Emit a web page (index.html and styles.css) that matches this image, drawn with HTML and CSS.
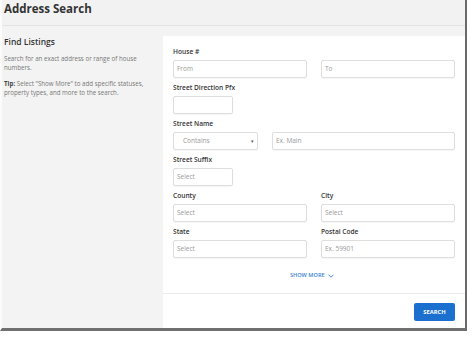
FILE: index.html
```html
<!DOCTYPE html>
<html>
<head>
<meta charset="utf-8">
<link rel="stylesheet" href="styles.css">
</head>
<body>
<div class="window">
  <div class="header"><h1 class="title">Address Search</h1></div>
  <div class="main">
    <aside class="sidebar">
      <h2 class="side-title">Find Listings</h2>
      <p class="side-text">Search for an exact address or range of house numbers.</p>
      <p class="side-text"><span class="tip">Tip:</span> Select "Show More" to add specific statuses, property types, and more to the search.</p>
    </aside>
    <section class="card">
      <div class="card-body">
        <div class="group">
          <div class="label">House #</div>
          <div class="row">
            <div class="input wide">From</div>
            <div class="input wide">To</div>
          </div>
        </div>
        <div class="group">
          <div class="label">Street Direction Pfx</div>
          <div class="row"><div class="input short"></div></div>
        </div>
        <div class="group">
          <div class="label">Street Name</div>
          <div class="row">
            <div class="input select">Contains<span class="caret">&#9662;</span></div>
            <div class="input fill">Ex. Main</div>
          </div>
        </div>
        <div class="group">
          <div class="label">Street Suffix</div>
          <div class="row"><div class="input short">Select</div></div>
        </div>
        <div class="group pair">
          <div class="col">
            <div class="label">County</div>
            <div class="input">Select</div>
          </div>
          <div class="col">
            <div class="label">City</div>
            <div class="input">Select</div>
          </div>
        </div>
        <div class="group pair">
          <div class="col">
            <div class="label">State</div>
            <div class="input">Select</div>
          </div>
          <div class="col">
            <div class="label">Postal Code</div>
            <div class="input">Ex. 59901</div>
          </div>
        </div>
        <div class="show-more">SHOW MORE <svg class="chev" width="6" height="4" viewBox="0 0 6 4"><path d="M0.5 0.7 L3 3.2 L5.5 0.7" fill="none" stroke="#3b7fd4" stroke-width="0.9"/></svg></div>
      </div>
      <div class="card-foot"><button class="btn">SEARCH</button></div>
    </section>
  </div>
</div>
</body>
</html>
```
FILE: styles.css
```css
* { box-sizing: border-box; }
html, body { margin: 0; padding: 0; background: #fff; }
body { font-family: "Open Sans", "Liberation Sans", sans-serif; color: #333; }

.window {
  width: 467px;
  height: 331px;
  background: #f3f3f3;
  border-right: 2px solid #6a6a6a;
  border-bottom: 3px solid #707070;
  border-left: 2px solid #fbfbfb;
  display: flex;
  flex-direction: column;
}
.header {
  height: 26px;
  flex: none;
  border-bottom: 1px solid #e3e3e3;
  background: #f2f2f2;
  padding: 0 0 0 2px;
}
.title {
  margin: 0;
  font-size: 11.5px;
  font-weight: 700;
  line-height: 17px;
  color: #333;
}
.main { flex: 1; display: flex; }
.sidebar {
  width: 161px;
  flex: none;
  padding: 10px 10px 0 2px;
}
.side-title {
  margin: 0 0 6px;
  font-size: 8.5px;
  font-weight: 600;
  line-height: 12px;
  color: #333;
}
.side-text {
  margin: 0 0 7px;
  font-size: 6.2px;
  line-height: 9px;
  color: #777;
}
.tip { color: #444; font-weight: 700; }

.card {
  flex: 1;
  margin-top: 10px;
  background: #fff;
  display: flex;
  flex-direction: column;
}
.card-body {
  height: 258px;
  padding: 11px 10px 0;
  border-bottom: 1px solid #ececec;
}
.group { margin-bottom: 5px; }
.pair { margin-top: 1px; }
.label {
  font-size: 6.6px;
  font-weight: 600;
  line-height: 10px;
  margin-bottom: 3px;
  color: #333;
}
.row { display: flex; gap: 14px; }
.input {
  height: 18px;
  border: 1px solid #dedede;
  border-radius: 2px;
  box-shadow: 0 1px 1px rgba(0,0,0,0.04);
  font-size: 6.5px;
  line-height: 16px;
  padding-left: 3px;
  color: #999;
  background: #fff;
}
.wide { flex: 1; }
.short { width: 60px; }
.select { width: 85px; padding-left: 9px; display: flex; justify-content: space-between; padding-right: 3px; }
.caret { font-size: 5px; color: #555; }
.fill { flex: 1; }
.pair { display: flex; gap: 14px; }
.col { flex: 1; }
.show-more {
  margin-top: 12px;
  text-align: center;
  font-size: 5.6px;
  font-weight: 600;
  line-height: 10px;
  color: #3b7fd4;
  padding-right: 4px;
}
.chev { margin-left: 2px; vertical-align: middle; }
.card-foot {
  flex: 1;
  display: flex;
  justify-content: flex-end;
  align-items: flex-start;
  padding: 9px 10px 0 0;
}
.btn {
  width: 41px;
  height: 18px;
  border: 0;
  border-radius: 2px;
  background: #1b70cf;
  color: #fff;
  font-family: "Open Sans", "Liberation Sans", sans-serif;
  font-size: 5.8px;
  font-weight: 700;
  padding: 0;
}
```
